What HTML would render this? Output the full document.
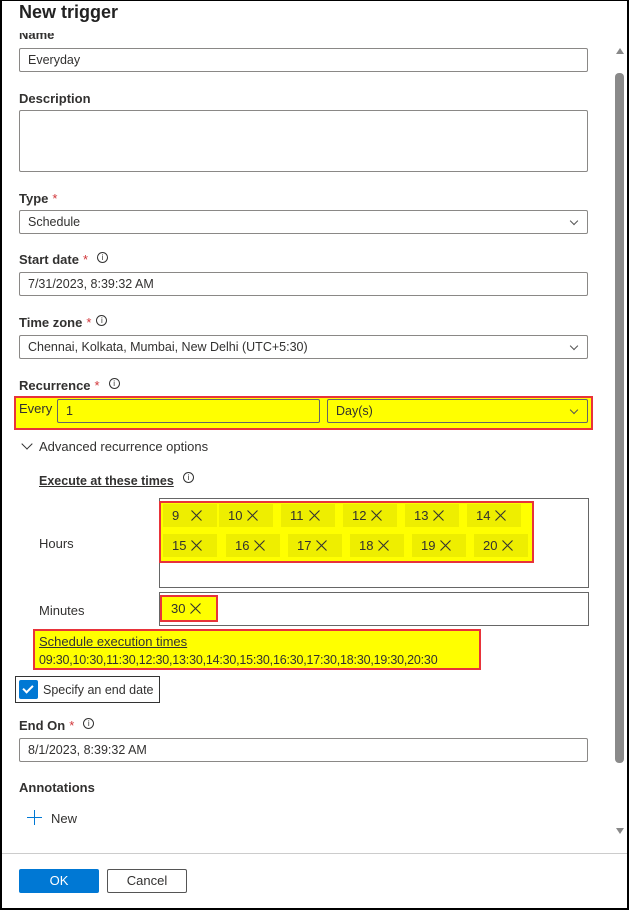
<!DOCTYPE html>
<html><head><style>
*{box-sizing:border-box;margin:0;padding:0}
body{width:629px;height:910px;background:#fff;font-family:"Liberation Sans",sans-serif;font-size:13px;color:#323130;position:relative;overflow:hidden}
.a{position:absolute}
.frame{position:absolute;left:0;top:0;width:629px;height:910px;border:2px solid #000;border-top-width:1px;pointer-events:none}
.lbl{position:absolute;left:19px;font-weight:bold;font-size:13px;color:#323130}
.req{color:#d13438;font-weight:normal;margin-left:4px}
.info{display:inline-block;width:11px;height:11px;border:1px solid #333;border-radius:50%;font-size:8px;line-height:9px;text-align:center;font-weight:normal;vertical-align:top;margin-left:9px}
.inp{position:absolute;left:19px;width:569px;height:24px;border:1px solid #8a8886;border-radius:2px;padding:4px 8px;font-size:12.5px}
.chev{position:absolute;right:10px;top:7px;width:6px;height:6px;border-right:1px solid #555;border-bottom:1px solid #555;transform:rotate(45deg)}
.chip{position:absolute;height:23px;width:54px;background:#eeee00;font-size:13px;padding:4px 0 0 9px}
.chip svg{position:absolute;left:28px;top:6px}
.red{position:absolute;border:2px solid #e8333a}
</style></head><body>
<div class="a" style="left:19px;top:2px;font-size:18px;font-weight:bold;color:#222">New trigger</div>
<div class="lbl" style="top:27px;clip-path:inset(6px 0 0 0)">Name</div>
<div class="inp" style="top:48px">Everyday</div>
<div class="lbl" style="top:91px">Description</div>
<div class="inp" style="top:110px;height:62px"></div>
<div class="lbl" style="top:191px">Type<span class="req">*</span></div>
<div class="inp" style="top:210px">Schedule<div class="chev"></div></div>
<div class="lbl" style="top:252px">Start date<span class="req">*</span><span class="info">i</span></div>
<div class="inp" style="top:272px">7/31/2023, 8:39:32 AM</div>
<div class="lbl" style="top:315px">Time zone<span class="req">*</span><span class="info" style="margin-left:5px">i</span></div>
<div class="inp" style="top:335px">Chennai, Kolkata, Mumbai, New Delhi (UTC+5:30)<div class="chev"></div></div>
<div class="lbl" style="top:378px">Recurrence<span class="req">*</span><span class="info">i</span></div>
<div class="red" style="left:14px;top:396px;width:579px;height:34px;background:#ffff00"></div>
<div class="a" style="left:19px;top:401px;font-size:13px">Every</div>
<div class="inp" style="left:57px;top:399px;width:263px;border-color:#666;background:#ffff00">1</div>
<div class="inp" style="left:327px;top:399px;width:261px;border-color:#666;background:#ffff00">Day(s)<div class="chev"></div></div>
<div class="a" style="left:23px;top:440px;width:8px;height:8px;border-right:1px solid #333;border-bottom:1px solid #333;transform:rotate(45deg)"></div>
<div class="a" style="left:39px;top:439px;font-size:13px">Advanced recurrence options</div>
<div class="a" style="left:39px;top:474px;font-weight:bold;text-decoration:underline;font-size:12.5px">Execute at these times</div>
<div class="a" style="left:174px;top:472px"><span class="info">i</span></div>
<div class="a" style="left:39px;top:536px">Hours</div>
<div class="a" style="left:159px;top:498px;width:430px;height:90px;border:1px solid #666"></div>
<div class="red" style="left:159px;top:501px;width:375px;height:62px;background:#ffff00"></div>
<div class="chip" style="left:163px;top:504px">9<svg width="11" height="11"><path d="M0.5 0.5L10.5 10.5M10.5 0.5L0.5 10.5" stroke="#333" stroke-width="1.1"/></svg></div>
<div class="chip" style="left:219px;top:504px">10<svg width="11" height="11"><path d="M0.5 0.5L10.5 10.5M10.5 0.5L0.5 10.5" stroke="#333" stroke-width="1.1"/></svg></div>
<div class="chip" style="left:281px;top:504px">11<svg width="11" height="11"><path d="M0.5 0.5L10.5 10.5M10.5 0.5L0.5 10.5" stroke="#333" stroke-width="1.1"/></svg></div>
<div class="chip" style="left:343px;top:504px">12<svg width="11" height="11"><path d="M0.5 0.5L10.5 10.5M10.5 0.5L0.5 10.5" stroke="#333" stroke-width="1.1"/></svg></div>
<div class="chip" style="left:405px;top:504px">13<svg width="11" height="11"><path d="M0.5 0.5L10.5 10.5M10.5 0.5L0.5 10.5" stroke="#333" stroke-width="1.1"/></svg></div>
<div class="chip" style="left:467px;top:504px">14<svg width="11" height="11"><path d="M0.5 0.5L10.5 10.5M10.5 0.5L0.5 10.5" stroke="#333" stroke-width="1.1"/></svg></div>
<div class="chip" style="left:163px;top:534px">15<svg width="11" height="11"><path d="M0.5 0.5L10.5 10.5M10.5 0.5L0.5 10.5" stroke="#333" stroke-width="1.1"/></svg></div>
<div class="chip" style="left:226px;top:534px">16<svg width="11" height="11"><path d="M0.5 0.5L10.5 10.5M10.5 0.5L0.5 10.5" stroke="#333" stroke-width="1.1"/></svg></div>
<div class="chip" style="left:288px;top:534px">17<svg width="11" height="11"><path d="M0.5 0.5L10.5 10.5M10.5 0.5L0.5 10.5" stroke="#333" stroke-width="1.1"/></svg></div>
<div class="chip" style="left:350px;top:534px">18<svg width="11" height="11"><path d="M0.5 0.5L10.5 10.5M10.5 0.5L0.5 10.5" stroke="#333" stroke-width="1.1"/></svg></div>
<div class="chip" style="left:412px;top:534px">19<svg width="11" height="11"><path d="M0.5 0.5L10.5 10.5M10.5 0.5L0.5 10.5" stroke="#333" stroke-width="1.1"/></svg></div>
<div class="chip" style="left:474px;top:534px">20<svg width="11" height="11"><path d="M0.5 0.5L10.5 10.5M10.5 0.5L0.5 10.5" stroke="#333" stroke-width="1.1"/></svg></div>
<div class="a" style="left:39px;top:603px">Minutes</div>
<div class="a" style="left:159px;top:592px;width:430px;height:34px;border:1px solid #666"></div>
<div class="red" style="left:160px;top:595px;width:58px;height:27px;background:#ffff00"></div>
<div class="chip" style="left:162px;top:597px;width:53px;background:#ffff00">30<svg width="11" height="11"><path d="M0.5 0.5L10.5 10.5M10.5 0.5L0.5 10.5" stroke="#333" stroke-width="1.1"/></svg></div>
<div class="red" style="left:33px;top:629px;width:448px;height:41px;background:#ffff00"></div>
<div class="a" style="left:39px;top:634px;text-decoration:underline">Schedule execution times</div>
<div class="a" style="left:39px;top:653px;font-size:12.5px;letter-spacing:-0.2px">09:30,10:30,11:30,12:30,13:30,14:30,15:30,16:30,17:30,18:30,19:30,20:30</div>
<div class="a" style="left:15px;top:676px;width:145px;height:27px;border:1px solid #333"></div>
<div class="a" style="left:19px;top:680px;width:19px;height:19px;background:#0078d4;border-radius:2px"><div style="position:absolute;left:6px;top:3px;width:6px;height:10px;border-right:2px solid #fff;border-bottom:2px solid #fff;transform:rotate(45deg)"></div></div>
<div class="a" style="left:43px;top:683px;font-size:12.5px">Specify an end date</div>
<div class="lbl" style="top:718px">End On<span class="req">*</span><span class="info">i</span></div>
<div class="inp" style="top:738px">8/1/2023, 8:39:32 AM</div>
<div class="lbl" style="top:780px">Annotations</div>
<div class="a" style="left:27px;top:817px;width:15px;height:1px;background:#0078d4"></div>
<div class="a" style="left:34px;top:810px;width:1px;height:15px;background:#0078d4"></div>
<div class="a" style="left:51px;top:811px">New</div>
<div class="a" style="left:616px;top:48px;width:0;height:0;border-left:4px solid transparent;border-right:4px solid transparent;border-bottom:6px solid #888"></div>
<div class="a" style="left:615px;top:73px;width:9px;height:690px;background:#8a8a8a;border-radius:4px"></div>
<div class="a" style="left:616px;top:828px;width:0;height:0;border-left:4px solid transparent;border-right:4px solid transparent;border-top:6px solid #888"></div>
<div class="a" style="left:2px;top:853px;width:625px;height:1px;background:#ccc"></div>
<div class="a" style="left:19px;top:869px;width:80px;height:24px;background:#0078d4;border-radius:2px;color:#fff;text-align:center;line-height:24px">OK</div>
<div class="a" style="left:107px;top:869px;width:80px;height:24px;border:1px solid #555;border-radius:2px;text-align:center;line-height:22px">Cancel</div>
<div class="frame"></div>
</body></html>
